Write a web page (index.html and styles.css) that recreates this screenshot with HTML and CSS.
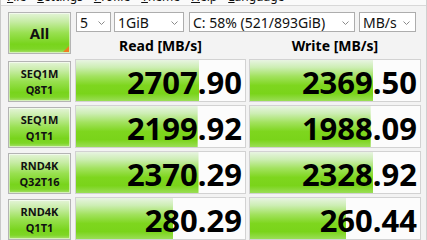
FILE: index.html
```html
<!DOCTYPE html>
<html>
<head>
<meta charset="utf-8">
<link rel="stylesheet" href="styles.css">
</head>
<body>
<div class="window">
  <div class="menubar">
    <div class="menu-inner">
      <span><u>F</u>ile</span><span><u>S</u>ettings</span><span><u>P</u>rofile</span><span><u>T</u>heme</span><span><u>H</u>elp</span><span><u>L</u>anguage</span>
    </div>
  </div>
  <div class="main">
    <div class="top">
      <div class="btn all">All<span class="corner"></span></div>
      <div class="selects">
        <div class="sel s1"><span>5</span><svg class="chev" width="7" height="4" viewBox="0 0 7 4"><polyline points="0.5,0.5 3.5,3.5 6.5,0.5" fill="none" stroke="#8a8a8a" stroke-width="1"/></svg></div>
        <div class="sel s2"><span>1GiB</span><svg class="chev" width="7" height="4" viewBox="0 0 7 4"><polyline points="0.5,0.5 3.5,3.5 6.5,0.5" fill="none" stroke="#8a8a8a" stroke-width="1"/></svg></div>
        <div class="sel s3"><span>C: 58% (521/893GiB)</span><svg class="chev" width="7" height="4" viewBox="0 0 7 4"><polyline points="0.5,0.5 3.5,3.5 6.5,0.5" fill="none" stroke="#8a8a8a" stroke-width="1"/></svg></div>
        <div class="sel s4"><span>MB/s</span><svg class="chev" width="7" height="4" viewBox="0 0 7 4"><polyline points="0.5,0.5 3.5,3.5 6.5,0.5" fill="none" stroke="#8a8a8a" stroke-width="1"/></svg></div>
      </div>
      <div class="head read">Read [MB/s]</div>
      <div class="head write">Write [MB/s]</div>
    </div>

    <div class="row">
      <div class="btn label">SEQ1M<br>Q8T1</div>
      <div class="val" style="--w:73%">2707.90</div>
      <div class="val" style="--w:72.5%">2369.50</div>
    </div>
    <div class="row">
      <div class="btn label">SEQ1M<br>Q1T1</div>
      <div class="val" style="--w:72%">2199.92</div>
      <div class="val" style="--w:71%">1988.09</div>
    </div>
    <div class="row">
      <div class="btn label">RND4K<br>Q32T16</div>
      <div class="val" style="--w:72.5%">2370.29</div>
      <div class="val" style="--w:72.5%">2328.92</div>
    </div>
    <div class="row">
      <div class="btn label">RND4K<br>Q1T1</div>
      <div class="val" style="--w:57.5%">280.29</div>
      <div class="val" style="--w:56.5%">260.44</div>
    </div>
  </div>
</div>
</body>
</html>
```

FILE: styles.css
```css
* { box-sizing: border-box; }
html, body {
  margin: 0;
  padding: 0;
  width: 427px;
  height: 240px;
  overflow: hidden;
  background: #f3f3f3;
  font-family: "Noto Sans", "Open Sans", sans-serif;
  color: #000;
}
.window {
  width: 427px;
  height: 240px;
  border-left: 1px solid #c8c8c8;
  border-right: 1px solid #d0d0d0;
  background: #f3f3f3;
  overflow: hidden;
}
.menubar {
  height: 6px;
  overflow: hidden;
  background: #fafafa;
  border-bottom: 1px solid #d8d8d8;
}
.menu-inner {
  display: flex;
  gap: 11px;
  padding-left: 6px;
  font-size: 12px;
  line-height: 14px;
  margin-top: -10px;
  color: #111;
}
.menu-inner u { text-decoration-thickness: 1px; text-underline-offset: 1px; }
.main {
  padding: 6px 0 0 7px;
  display: flex;
  flex-direction: column;
  gap: 3px;
}
.top {
  display: grid;
  grid-template-columns: 63px 171px 171px;
  grid-template-rows: 20px 24px;
  column-gap: 4px;
  height: 44px;
}
.btn {
  border: 1px solid #b4b4b4;
  background: linear-gradient(#e4f4d8 0%, #c6eca4 22%, #98e050 50%, #78d41c 78%, #7ed626 90%, #a8e070 100%);
  box-shadow: inset 0 0 0 1px rgba(255,255,255,0.55);
  display: flex;
  align-items: center;
  justify-content: center;
  text-align: center;
  font-weight: bold;
  color: #111;
}
.all {
  grid-row: 1 / 3;
  grid-column: 1;
  height: 42px;
  font-size: 15px;
  position: relative;
}
.corner {
  position: absolute;
  right: 1px;
  bottom: 1px;
  width: 0;
  height: 0;
  border-left: 6px solid transparent;
  border-bottom: 6px solid #ef7d22;
}
.selects {
  grid-row: 1;
  grid-column: 2 / 4;
  display: flex;
  padding-left: 1px;
}
.sel {
  height: 20px;
  background: #fff;
  border: 1px solid #adadad;
  display: flex;
  align-items: center;
  justify-content: space-between;
  padding: 0 5px 0 3px;
  font-size: 14px;
  color: #111;
}
.chev { flex: none; margin-top: 1px; }
.s1 { width: 35px; }
.s2 { width: 70px; margin-left: 3px; }
.s3 { width: 166px; margin-left: 5px; }
.s4 { width: 57px; margin-left: 4px; }
.head {
  grid-row: 2;
  display: flex;
  align-items: center;
  justify-content: center;
  font-weight: bold;
  font-size: 14px;
  padding-top: 3px;
}
.read { grid-column: 2; }
.write { grid-column: 3; margin-left: -1px; }
.row {
  display: grid;
  grid-template-columns: 63px 171px 171px;
  column-gap: 4px;
  height: 43px;
}
.row .val:last-child { margin-left: -1px; }
.label {
  margin-top: 2px;
  height: 41px;
  font-size: 11px;
  line-height: 16px;
  padding-top: 1px;
}
.val {
  height: 43px;
  border: 1px solid #d2d2d2;
  background:
    linear-gradient(#e8f4e2 0%, #cdeeb4 18%, #a2e25e 40%, #7ed61e 62%, #7ad41a 82%, #9ade56 100%) no-repeat,
    #fcfcfc;
  background-size: var(--w) 100%, auto;
  display: flex;
  align-items: center;
  justify-content: flex-end;
  padding: 3px 3px 0 0;
  font-weight: bold;
  font-size: 31px;
  line-height: 40px;
  letter-spacing: 0;
  color: #000;
}
```
